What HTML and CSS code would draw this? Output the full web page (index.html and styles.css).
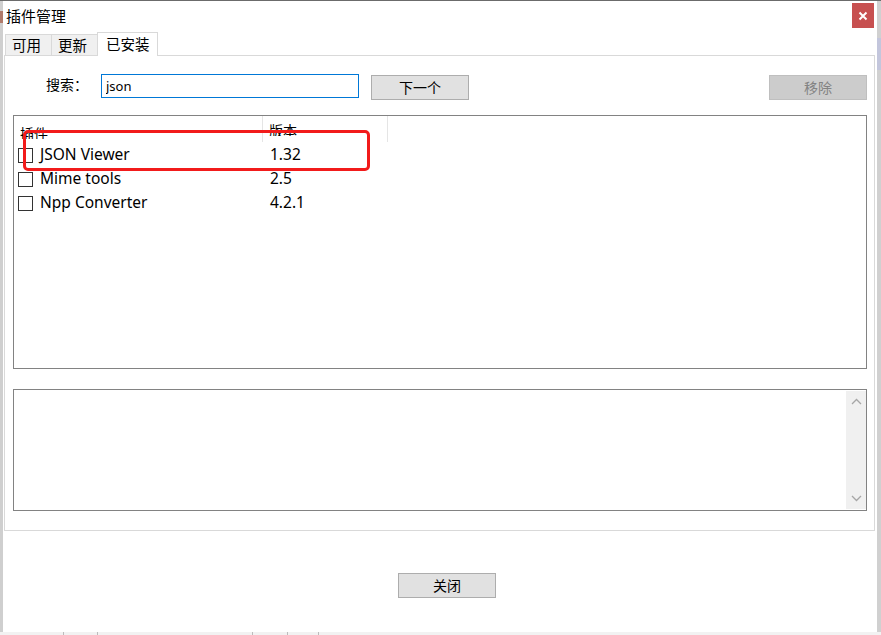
FILE: index.html
```html
<!DOCTYPE html>
<html lang="zh-CN">
  <head>
    <meta charset="UTF-8" />
    <meta name="viewport" content="width=device-width, initial-scale=1.0" />
    <title>插件管理</title>
    <link rel="stylesheet" href="styles.css">
  </head>
  <body>
    <div class="desktop">
      <div class="edge-left"><span class="edge-mark"></span></div>
      <div class="dialog">
        <div class="title-bar">
          <span class="title">插件管理</span>
          <span class="close-btn">
            <svg width="10" height="10" viewBox="0 0 10 10">
              <path d="M1.5 1.5 L8.5 8.5 M8.5 1.5 L1.5 8.5" stroke="#fff" stroke-width="2" />
            </svg>
          </span>
        </div>
        <div class="tabs">
          <span class="tab">可用</span>
          <span class="tab">更新</span>
          <span class="tab active">已安装</span>
        </div>
        <div class="panel">
          <div class="search-row">
            <label class="search-label" for="searchInput">搜索：</label>
            <input class="search-input" id="searchInput" type="text" value="json" />
            <button class="btn">下一个</button>
            <button class="btn disabled">移除</button>
          </div>
          <div class="plugin-list">
            <div class="list-header">
              <div class="col-name"><span class="head-text">插件</span></div>
              <div class="col-version"><span class="head-text">版本</span></div>
            </div>
            <div class="list-row">
              <div class="col-name"><span class="checkbox"></span>JSON Viewer</div>
              <div class="col-version">1.32</div>
            </div>
            <div class="list-row">
              <div class="col-name"><span class="checkbox"></span>Mime tools</div>
              <div class="col-version">2.5</div>
            </div>
            <div class="list-row">
              <div class="col-name"><span class="checkbox"></span>Npp Converter</div>
              <div class="col-version">4.2.1</div>
            </div>
            <div class="mark-box"></div>
          </div>
          <div class="desc-box">
            <div class="desc-text"></div>
            <div class="scrollbar">
              <svg width="11" height="7" viewBox="0 0 11 7">
                <path d="M1 6 L5.5 1.5 L10 6" fill="none" stroke="#a6a6a6" stroke-width="1.3" />
              </svg>
              <svg width="11" height="7" viewBox="0 0 11 7">
                <path d="M1 1 L5.5 5.5 L10 1" fill="none" stroke="#a6a6a6" stroke-width="1.3" />
              </svg>
            </div>
          </div>
        </div>
        <div class="footer">
          <button class="btn close">关闭</button>
        </div>
      </div>
      <div class="edge-right"><span class="edge-blue"></span></div>
    </div>
    <div class="under">
      <span class="under-cell">&nbsp;</span>
      <span class="under-cell w1">&nbsp;</span>
      <span class="under-cell w2">CSDN博客发帖</span>
      <span class="under-cell w3">&nbsp;</span>
      <span class="under-cell w4">&nbsp;</span>
    </div>
  </body>
</html>
```

FILE: styles.css
```css
:root {
  --ui-font: "Noto Sans", "Noto Sans CJK SC", sans-serif;
  --btn-bg: #e1e1e1;
  --btn-border: #adadad;
  --tab-border: #d9d9d9;
  --list-border: #828282;
}

body {
  margin: 0;
  padding: 0;
  background-color: #d2d2d2;
  font-family: var(--ui-font);
  color: #000;
  overflow: hidden;
}

.desktop {
  display: flex;
  height: 632px;
}

.edge-left {
  width: 3px;
  background-color: #cfcfcf;
  border-top: 1px solid #6b6b6b;
  display: flex;
  flex-direction: column;
}

.edge-mark {
  height: 12px;
  margin-top: 10px;
  background-color: #b07a6a;
}

.edge-right {
  width: 4px;
  background-color: #d0d0d0;
  border-top: 1px solid #6b6b6b;
  display: flex;
  flex-direction: column;
}

.edge-blue {
  height: 32px;
  margin-top: 37px;
  background-color: #c3c6dc;
}

.dialog {
  width: 874px;
  background-color: #fff;
  border-top: 1px solid #6b6b6b;
  display: flex;
  flex-direction: column;
}

.title-bar {
  height: 31px;
  display: flex;
  justify-content: space-between;
  align-items: flex-start;
}

.title {
  font-size: 15px;
  margin-left: 3px;
  margin-top: 3px;
  line-height: 24px;
}

.close-btn {
  width: 22px;
  height: 25px;
  margin-top: 2px;
  margin-right: 3px;
  background-color: #c75050;
  display: flex;
  align-items: center;
  justify-content: center;
}

.tabs {
  height: 23px;
  display: flex;
  align-items: flex-end;
  padding-left: 2px;
  position: relative;
  z-index: 1;
}

.tab {
  height: 21px;
  box-sizing: border-box;
  border: 1px solid var(--tab-border);
  border-bottom: none;
  background-color: #f0f0f0;
  font-size: 14.5px;
  line-height: 20px;
  padding: 0 0 0 6px;
  width: 47px;
}

.tab + .tab {
  border-left: none;
  width: 46px;
}

.tab.active {
  height: 24px;
  width: 61px;
  margin-left: -1px;
  margin-bottom: -1px;
  padding-left: 8px;
  border-left: 1px solid var(--tab-border);
  background-color: #fff;
  line-height: 22px;
}

.panel {
  margin-left: 1px;
  width: 871px;
  height: 476px;
  box-sizing: border-box;
  border: 1px solid var(--tab-border);
  padding: 18px 7px 0 8px;
}

.search-row {
  display: flex;
  align-items: flex-start;
  height: 26px;
}

.search-label {
  font-size: 14px;
  margin-left: 33px;
  width: 55px;
  line-height: 22px;
}

.search-input {
  width: 258px;
  height: 24px;
  box-sizing: border-box;
  border: 1px solid #0078d7;
  outline: none;
  font-family: var(--ui-font);
  font-size: 13px;
  padding: 0 4px;
  margin: 0;
}

.btn {
  width: 98px;
  height: 25px;
  margin-top: 1px;
  background-color: var(--btn-bg);
  border: 1px solid var(--btn-border);
  font-family: var(--ui-font);
  font-size: 14px;
  color: #000;
  padding: 0;
  line-height: 21px;
}

.search-input + .btn {
  margin-left: 12px;
}

.btn.disabled {
  margin-left: auto;
  background-color: #cccccc;
  border-color: #bfbfbf;
  color: #838383;
}

.plugin-list {
  margin-top: 15px;
  height: 254px;
  box-sizing: border-box;
  border: 1px solid var(--list-border);
  position: relative;
}

.list-header {
  display: flex;
  height: 26px;
}

.list-header .col-name,
.list-header .col-version {
  border-right: 1px solid #e5e5e5;
  padding-top: 6px;
}

.head-text {
  display: block;
  height: 14px;
  overflow: hidden;
  font-size: 14px;
  line-height: 18px;
}

.col-name {
  width: 249px;
  box-sizing: border-box;
  padding-left: 6px;
  display: flex;
  align-items: center;
}

.col-version {
  width: 125px;
  box-sizing: border-box;
  padding-left: 6px;
}

.list-row {
  display: flex;
  height: 24px;
  font-size: 15.5px;
  line-height: 24px;
}

.list-row .col-name {
  padding-left: 4px;
}

.list-row .col-version {
  padding-left: 7px;
}

.checkbox {
  width: 15px;
  height: 15px;
  box-sizing: border-box;
  border: 1px solid #333;
  margin-right: 7px;
  margin-top: 2px;
}

.mark-box {
  position: absolute;
  left: 9px;
  top: 14px;
  width: 347px;
  height: 41px;
  box-sizing: border-box;
  border: 3px solid #f21b1b;
  border-radius: 5px;
}

.desc-box {
  margin-top: 20px;
  height: 122px;
  box-sizing: border-box;
  border: 1px solid var(--list-border);
  padding: 1px 0 1px 0;
  display: flex;
}

.desc-text {
  flex: 1;
}

.scrollbar {
  width: 20px;
  background-color: #f0f0f0;
  display: flex;
  flex-direction: column;
  align-items: center;
  justify-content: space-between;
  padding: 7px 0 7px;
  box-sizing: border-box;
}

.footer {
  flex: 1;
  padding-top: 42px;
  padding-left: 395px;
}

.btn.close {
  margin-top: 0;
  line-height: 22px;
}

.under {
  height: 3px;
  display: flex;
  background-color: #f2f2f2;
  overflow: hidden;
  font-size: 15px;
  line-height: 22px;
  color: #333;
}

.under-cell {
  width: 63px;
  border-right: 1px solid #bcbcbc;
}

.under-cell.w1 {
  width: 33px;
}

.under-cell.w2 {
  width: 142px;
  padding-left: 12px;
}

.under-cell.w3 {
  width: 34px;
}

.under-cell.w4 {
  width: 30px;
}
```
